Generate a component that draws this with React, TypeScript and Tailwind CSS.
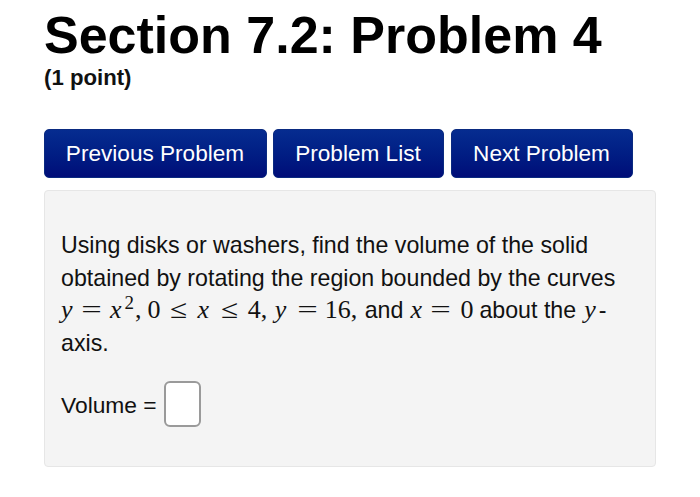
const btn =
  "flex h-[49px] items-center justify-center rounded-[5px] border border-[#0a2a80] bg-gradient-to-b from-[#062c90] to-[#000c78] pr-[1px] text-[22.6px] text-white";
const serif = "font-['Liberation_Serif',serif] text-[26px]";
const op = "inline-block text-center font-['Liberation_Serif',serif] text-[26px]";

export default function App() {
  return (
    <div className="h-[497px] w-[700px] overflow-hidden bg-white pl-[44px] pt-[8px] font-['Liberation_Sans',Arial,sans-serif] text-[#111]">
      <h1 className="text-[52px] font-bold leading-[54px] text-black">Section 7.2: Problem 4</h1>
      <p className="mt-[3px] text-[22.2px] font-bold leading-[26px]">(1 point)</p>

      <div className="mt-[38px] flex">
        <button className={`${btn} w-[223px]`}>Previous Problem</button>
        <button className={`${btn} ml-[6px] w-[171px]`}>Problem List</button>
        <button className={`${btn} ml-[7px] w-[182px]`}>Next Problem</button>
      </div>

      <div className="mt-[12px] h-[277px] w-[612px] rounded-[4px] border border-[#e6e6e6] bg-[#f4f4f4] pl-[16px] pr-[16px] pt-[38px]">
        <div className="text-[23.2px] leading-[32.5px]">
          <p>Using disks or washers, find the volume of the solid</p>
          <p>obtained by rotating the region bounded by the curves</p>
          <p className="flex h-[32.5px] items-baseline whitespace-pre">
            <i className={serif}>y</i>
            <span className={`${op} ml-[8.5px] w-[21px] scale-x-[1.4]`}>=</span>
            <i className={`${serif} ml-[8px]`}>x</i>
            <span className="ml-[3px] inline-block -translate-y-[9px] font-['Liberation_Serif',serif] text-[19px]">2</span>
            <span className={`${serif} ml-[1px]`}>,</span>
            <span className={`${serif} ml-[6px]`}>0</span>
            <span className={`${op} ml-[9px] w-[17px] scale-x-[1.2]`}>≤</span>
            <i className={`${serif} ml-[11px]`}>x</i>
            <span className={`${op} ml-[11.5px] w-[17px] scale-x-[1.2]`}>≤</span>
            <span className={`${serif} ml-[10px]`}>4,</span>
            <i className={`${serif} ml-[7.5px]`}>y</i>
            <span className={`${op} ml-[10.5px] w-[21px] scale-x-[1.4]`}>=</span>
            <span className={`${serif} ml-[7px]`}>16,</span>
            <span className="ml-[7.5px]">and</span>
            <i className={`${serif} ml-[7px]`}>x</i>
            <span className={`${op} ml-[8.5px] w-[21px] scale-x-[1.4]`}>=</span>
            <span className={`${serif} ml-[9px]`}>0</span>
            <span className="ml-[6px]">about the</span>
            <i className={`${serif} ml-[8px]`}>y</i>
            <span className="ml-[3px]">-</span>
          </p>
          <p>axis.</p>
        </div>
        <div className="mt-[22px] flex items-center text-[22.8px]">
          <span className="pt-[3px]">Volume =</span>
          <span className="ml-[7px] h-[46px] w-[37px] rounded-[6px] border-2 border-[#9a9a9a] bg-white" />
        </div>
      </div>
    </div>
  );
}
